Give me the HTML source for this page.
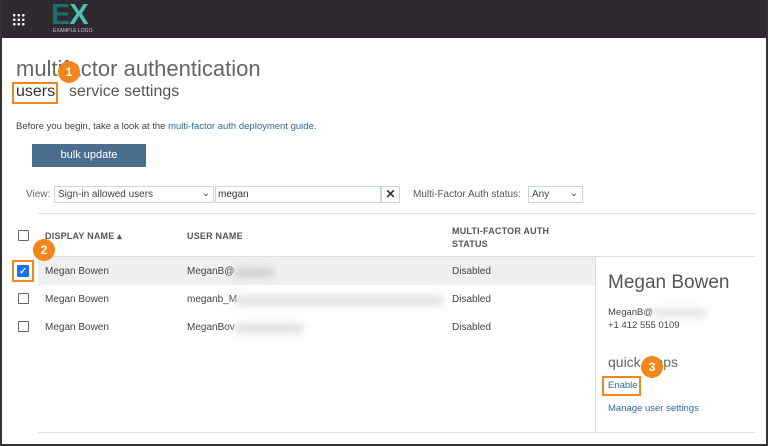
<!DOCTYPE html>
<html><head><style>
*{margin:0;padding:0;box-sizing:border-box}
body{width:768px;height:446px;overflow:hidden;background:#fff;font-family:"Liberation Sans",sans-serif;color:#444;position:relative}
.a{position:absolute;white-space:nowrap}
.frame{position:absolute;left:0;top:0;width:768px;height:446px;border:2px solid #333;border-top:none;pointer-events:none}
.top{left:0;top:0;width:768px;height:38px;background:#2f2a31}
.badge{position:absolute;width:22px;height:22px;border-radius:50%;background:#f0861c;color:#fff;font-size:12px;font-weight:bold;text-align:center;line-height:22px}
.obox{position:absolute;border:2px solid #f0861c}
.cb{position:absolute;width:11px;height:11px;border:1px solid #666;background:#fff;border-radius:1px}
.t{font-size:10px;color:#444}
.h{font-size:9px;font-weight:bold;color:#555;letter-spacing:.2px}
.blur{position:absolute;background:#ccc;filter:blur(4px);height:9px;border-radius:4px}
.link{color:#2f6a9c}
</style></head><body>
<div class="a top"></div>
<div class="a" style="left:12px;top:13px;width:13px;height:13px;background:
radial-gradient(circle,#fff 1.2px,transparent 1.5px) 0 0/4.5px 4.5px"></div>
<div class="a" style="left:51px;top:1px;font-size:29px;font-weight:bold;letter-spacing:-1px;line-height:28px"><span style="color:#1e6e6a">E</span><span style="color:#4bc0b0">X</span></div>
<div class="a" style="left:53px;top:28px;font-size:5px;color:#ccc">EXAMPLE LOGO</div>

<div class="a" style="left:16px;top:56px;font-size:22px;color:#666">multifactor authentication</div>
<div class="a" style="left:16px;top:83px;font-size:16px;color:#333">users</div>
<div class="a" style="left:69px;top:83px;font-size:16px;color:#555">service settings</div>
<div class="obox" style="left:12px;top:82px;width:46px;height:22px"></div>
<div class="badge" style="left:58px;top:61px">1</div>

<div class="a t" style="left:16px;top:121px;font-size:9.5px">Before you begin, take a look at the <span class="link">multi-factor auth deployment guide</span>.</div>
<div class="a" style="left:32px;top:144px;width:114px;height:23px;background:#4b6e8e;color:#fff;font-size:11px;text-align:center;line-height:23px">bulk update</div>

<div class="a t" style="left:26px;top:189px;color:#666">View:</div>
<div class="a" style="left:54px;top:186px;width:160px;height:17px;border:1px solid #c9d6e2;font-size:10px;padding:2px 3px;color:#444">Sign-in allowed users<span style="position:absolute;right:3px;top:1px;font-size:10px">⌄</span></div>
<div class="a" style="left:215px;top:186px;width:166px;height:17px;border:1px solid #c9d6e2;font-size:10px;padding:2px 2px;color:#333">megan</div>
<div class="a" style="left:381px;top:186px;width:19px;height:17px;border:1px solid #c9d6e2;font-size:12px;font-weight:bold;text-align:center;line-height:15px;color:#333">✕</div>
<div class="a t" style="left:413px;top:189px;color:#555">Multi-Factor Auth status:</div>
<div class="a" style="left:528px;top:186px;width:55px;height:17px;border:1px solid #c9d6e2;font-size:10px;padding:2px 3px">Any<span style="position:absolute;right:4px;top:1px">⌄</span></div>

<div class="a" style="left:38px;top:213px;width:717px;height:1px;background:#ddd"></div>
<div class="cb" style="left:18px;top:230px"></div>
<div class="a h" style="left:45px;top:231px">DISPLAY NAME ▴</div>
<div class="a h" style="left:187px;top:231px">USER NAME</div>
<div class="a h" style="left:452px;top:225px;line-height:13px">MULTI-FACTOR AUTH<br>STATUS</div>
<div class="a" style="left:38px;top:256px;width:717px;height:1px;background:#ddd"></div>

<div class="a" style="left:38px;top:257px;width:557px;height:28px;background:#eef0ef"></div>
<div class="a" style="left:17px;top:265px;width:12px;height:12px;background:#1a73e8;border-radius:1px;color:#fff;font-size:9px;text-align:center;line-height:12px;font-weight:bold">✓</div>
<div class="obox" style="left:12px;top:260px;width:22px;height:22px"></div>
<div class="badge" style="left:33px;top:239px">2</div>
<div class="cb" style="left:18px;top:293px"></div>
<div class="cb" style="left:18px;top:321px"></div>

<div class="a t" style="left:45px;top:266px">Megan Bowen</div>
<div class="a t" style="left:45px;top:294px">Megan Bowen</div>
<div class="a t" style="left:45px;top:322px">Megan Bowen</div>
<div class="a t" style="left:187px;top:266px">MeganB@</div>
<div class="a t" style="left:187px;top:294px">meganb_M</div>
<div class="a t" style="left:187px;top:322px">MeganBov</div>
<div class="blur" style="left:234px;top:268px;width:40px"></div>
<div class="blur" style="left:234px;top:296px;width:210px;background:#ddd"></div>
<div class="blur" style="left:234px;top:324px;width:70px;background:#ddd"></div>
<div class="a t" style="left:452px;top:266px">Disabled</div>
<div class="a t" style="left:452px;top:294px">Disabled</div>
<div class="a t" style="left:452px;top:322px">Disabled</div>

<div class="a" style="left:595px;top:257px;width:1px;height:175px;background:#ddd"></div>
<div class="a" style="left:608px;top:272px;font-size:19px;color:#555">Megan Bowen</div>
<div class="a t" style="left:608px;top:307px;font-size:9.5px">MeganB@</div>
<div class="blur" style="left:652px;top:308px;width:55px;background:#e3e3e3"></div>
<div class="a t" style="left:608px;top:320px;font-size:9.5px">+1 412 555 0109</div>
<div class="a" style="left:608px;top:354px;font-size:14px;color:#666">quick steps</div>
<div class="badge" style="left:641px;top:356px">3</div>
<div class="a t link" style="left:608px;top:380px;font-size:9.5px">Enable</div>
<div class="obox" style="left:602px;top:376px;width:39px;height:20px"></div>
<div class="a t link" style="left:608px;top:403px;font-size:9.5px">Manage user settings</div>
<div class="a" style="left:38px;top:432px;width:717px;height:1px;background:#ddd"></div>
<div class="frame"></div>
</body></html>
